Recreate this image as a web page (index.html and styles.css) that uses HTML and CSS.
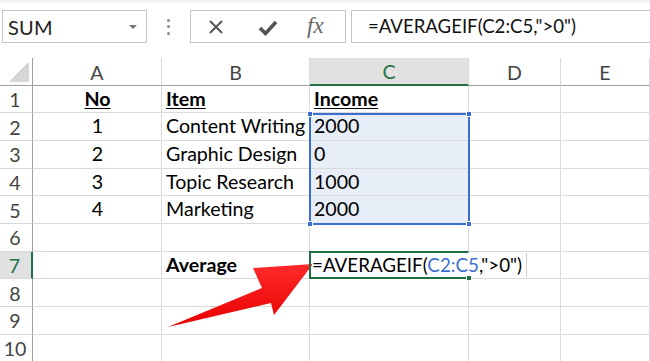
FILE: index.html
```html
<!DOCTYPE html>
<html>
<head>
<meta charset="utf-8">
<link rel="stylesheet" href="styles.css">
</head>
<body>
<div class="app">
  <div class="toolbar">
    <div class="namebox">
      <span class="nb-text">SUM</span>
      <svg class="nb-arrow" width="8" height="4" viewBox="0 0 8 4"><path d="M0 0H8L4 4Z" fill="#777"/></svg>
    </div>
    <div class="grip"><i></i><i></i><i></i></div>
    <div class="fbtns">
      <svg class="ico-x" width="16" height="16" viewBox="0 0 16 16"><path d="M2 2L14 14M14 2L2 14" stroke="#555" stroke-width="2" fill="none"/></svg>
      <svg class="ico-ok" width="20" height="16" viewBox="0 0 20 16"><path d="M2 8L7.5 13.5L18 2" stroke="#555" stroke-width="3.6" fill="none"/></svg>
      <span class="fx">fx</span>
    </div>
    <div class="formula">=AVERAGEIF(C2:C5,"&gt;0")</div>
  </div>

  <div class="sheet">
    <div class="hd corner"><span class="tri"></span></div>
    <div class="hd col">A</div>
    <div class="hd col">B</div>
    <div class="hd col active">C</div>
    <div class="hd col">D</div>
    <div class="hd col">E</div>

    <div class="rh">1</div>
    <div class="c ctr"><b class="u">No</b></div>
    <div class="c"><b class="u">Item</b></div>
    <div class="c"><b class="u">Income</b></div>
    <div class="c"></div>
    <div class="c"></div>

    <div class="rh">2</div>
    <div class="c ctr">1</div>
    <div class="c">Content Writing</div>
    <div class="c sel">2000</div>
    <div class="c"></div>
    <div class="c"></div>

    <div class="rh">3</div>
    <div class="c ctr">2</div>
    <div class="c">Graphic Design</div>
    <div class="c sel">0</div>
    <div class="c"></div>
    <div class="c"></div>

    <div class="rh">4</div>
    <div class="c ctr">3</div>
    <div class="c">Topic Research</div>
    <div class="c sel">1000</div>
    <div class="c"></div>
    <div class="c"></div>

    <div class="rh">5</div>
    <div class="c ctr">4</div>
    <div class="c">Marketing</div>
    <div class="c sel">2000</div>
    <div class="c"></div>
    <div class="c"></div>

    <div class="rh">6</div>
    <div class="c"></div>
    <div class="c"></div>
    <div class="c"></div>
    <div class="c"></div>
    <div class="c"></div>

    <div class="rh active">7</div>
    <div class="c"></div>
    <div class="c"><b>Average</b></div>
    <div class="c editcell">
      <div class="editor">=AVERAGEIF(<span class="ref">C2:C5</span>,"&gt;0")</div>
      <span class="handle green"></span>
    </div>
    <div class="c"></div>
    <div class="c"></div>

    <div class="rh">8</div>
    <div class="c"></div>
    <div class="c"></div>
    <div class="c"></div>
    <div class="c"></div>
    <div class="c"></div>

    <div class="rh">9</div>
    <div class="c"></div>
    <div class="c"></div>
    <div class="c"></div>
    <div class="c"></div>
    <div class="c"></div>

    <div class="rh">10</div>
    <div class="c"></div>
    <div class="c"></div>
    <div class="c"></div>
    <div class="c"></div>
    <div class="c"></div>

    <div class="selbox">
      <span class="handle blue tl"></span>
      <span class="handle blue tr"></span>
      <span class="handle blue bl"></span>
      <span class="handle blue br"></span>
    </div>
  </div>

  <svg class="arrow" width="650" height="361" viewBox="0 0 650 361">
    <defs>
      <linearGradient id="ag" x1="0" y1="0" x2="0" y2="1">
        <stop offset="0" stop-color="#ff2a2a"/>
        <stop offset="1" stop-color="#e80000"/>
      </linearGradient>
    </defs>
    <path d="M168 327 L262 288 L253 268 L313 264 L274 315 L271 303 Z" fill="url(#ag)"/>
  </svg>
</div>
</body>
</html>
```

FILE: styles.css
```css
* { box-sizing: border-box; }
html, body { margin: 0; padding: 0; background: #fff; }
body { width: 650px; height: 361px; overflow: hidden; }

.app {
  position: relative;
  width: 650px;
  height: 361px;
  overflow: hidden;
  font-family: Lato, "Liberation Sans", sans-serif;
  font-size: 19.6px;
  color: #000;
}

/* ---------- toolbar ---------- */
.toolbar {
  height: 58px;
  padding-top: 10px;
  display: flex;
  align-items: flex-start;
  background: linear-gradient(#ececec 0px, #ffffff 4px);
}
.namebox {
  margin-left: 2px;
  width: 145px;
  height: 33px;
  border: 1px solid #c6c6c6;
  display: flex;
  align-items: center;
  justify-content: space-between;
  padding: 0 9px 0 5px;
  color: #222;
  font-size: 20px;
}
.nb-text { letter-spacing: 0.2px; }
.grip {
  width: 43px;
  height: 33px;
  display: flex;
  flex-direction: column;
  align-items: center;
  justify-content: center;
  gap: 3.5px;
}
.grip i {
  display: block;
  width: 3px;
  height: 3px;
  border-radius: 50%;
  background: #8a8a8a;
}
.fbtns {
  width: 156px;
  height: 33px;
  border: 1px solid #c6c6c6;
  display: flex;
  align-items: center;
  padding-left: 17px;
}
.ico-x { margin-top: 1px; }
.ico-ok { margin-left: 34px; margin-top: 2px; }
.fx {
  margin-left: 29px;
  font-family: "Liberation Serif", serif;
  font-style: italic;
  font-size: 23px;
  color: #666;
  margin-top: -2px;
}
.formula {
  margin-left: 5px;
  flex: 1;
  height: 33px;
  margin-right: -4px;
  border: 1px solid #c6c6c6;
  padding-left: 16px;
  line-height: 31px;
  color: #111;
  font-size: 18.6px;
}

/* ---------- sheet ---------- */
.sheet {
  position: relative;
  display: grid;
  grid-template-columns: 33px 129px 148px 159px 92px 89px;
  grid-template-rows: 27.5px repeat(10, 27.7px);
}
.hd {
  background: #fff;
  border-right: 1px solid #d8d8d8;
  border-bottom: 1px solid #9f9f9f;
  display: flex;
  align-items: center;
  justify-content: center;
  color: #444;
  padding-top: 2px;
}
.hd.col.active {
  background: #e1e1e1;
  color: #217346;
  border-bottom: 2px solid #217346;
}
.corner {
  border-right: 1px solid #9f9f9f;
  align-items: flex-end;
  justify-content: flex-end;
  padding: 0 3px 3px 0;
}
.tri {
  width: 20px;
  height: 20px;
  background: linear-gradient(to bottom right, transparent 50%, #d6d6d6 50%);
}
.rh {
  border-right: 1px solid #9f9f9f;
  border-bottom: 1px solid #d8d8d8;
  display: flex;
  align-items: center;
  justify-content: center;
  color: #444;
  padding-top: 1px;
  padding-right: 2px;
}
.rh.active {
  background: #e1e1e1;
  color: #217346;
  border-right: 2px solid #217346;
}
.c {
  position: relative;
  border-right: 1px solid #dadada;
  border-bottom: 1px solid #dadada;
  padding: 0 3px 0 4px;
  line-height: 26px;
  white-space: nowrap;
}
.c.ctr { text-align: center; }
.c.sel { background: #e8eef8; }
.u { text-decoration: underline; text-underline-offset: 2px; }
b { font-weight: bold; }

.editcell {
  border-top: 2px solid #1e7145;
  border-bottom: 2px solid #1e7145;
  border-left: 2px solid #1e7145;
  margin-left: -1px;
  margin-top: -1px;
  z-index: 2;
}
.editor {
  position: absolute;
  left: 1px;
  top: 0;
  width: 215px;
  height: 24px;
  background: #fff;
  border-right: 1px solid #d0d0d0;
  line-height: 24px;
  white-space: nowrap;
  font-size: 18.8px;
}
.ref { color: #3b6fd1; }

.selbox {
  position: absolute;
  left: 309px;
  top: 54.7px;
  width: 161px;
  height: 112.3px;
  border: 2px solid #3a6fd0;
  pointer-events: none;
}
.handle {
  position: absolute;
  width: 6px;
  height: 6px;
  border: 1px solid #fff;
}
.handle.blue { background: #3a6fd0; }
.handle.green { background: #1e7145; right: -4px; bottom: -4px; }
.handle.tl { left: -4px; top: -4px; }
.handle.tr { right: -4px; top: -4px; }
.handle.bl { left: -4px; bottom: -4px; }
.handle.br { right: -4px; bottom: -4px; }

.arrow {
  position: absolute;
  left: 0;
  top: 0;
  pointer-events: none;
}
```
